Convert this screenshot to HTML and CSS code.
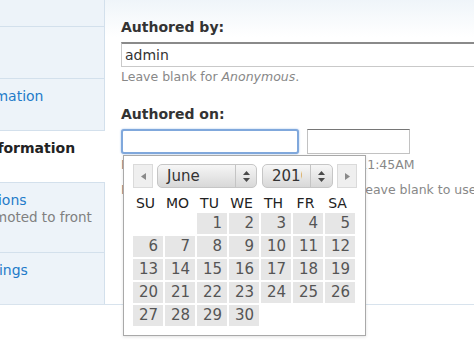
FILE: index.html
```html
<!DOCTYPE html>
<html>
<head>
    <link rel="stylesheet" href="styles.css">
</head>
<body>
    <div class="vertical-tabs">
        <ul class="vertical-tabs-list">
            <li class="vertical-tab">
                <a class="tab-title" href="#">Revision information</a>
                <div class="tab-summary">No revision</div>
            </li>
            <li class="vertical-tab">
                <a class="tab-title" href="#">Menu settings</a>
                <div class="tab-summary">Not in menu</div>
            </li>
            <li class="vertical-tab">
                <a class="tab-title" href="#">Location information</a>
                <div class="tab-summary">Not specified</div>
            </li>
            <li class="vertical-tab selected">
                <a class="tab-title" href="#">Authoring information</a>
                <div class="tab-summary">By admin</div>
            </li>
            <li class="vertical-tab">
                <a class="tab-title" href="#">Publishing options</a>
                <div class="tab-summary">Published, Promoted to front page</div>
            </li>
            <li class="vertical-tab">
                <a class="tab-title" href="#">Comment settings</a>
                <div class="tab-summary">Open</div>
            </li>
        </ul>

        <div class="vertical-tabs-pane">
            <div class="form-item">
                <label class="form-label">Authored by:</label>
                <input class="form-text author-input" type="text" value="admin">
                <div class="description">Leave blank for <em>Anonymous</em>.</div>
            </div>

            <div class="form-item date-item">
                <label class="form-label">Authored on:</label>
                <div class="date-row">
                    <div class="date-field">
                        <input class="form-text date-input focused" type="text">
                        <div class="description">Format: 06/01/2010</div>

                        <!-- popup calendar -->
                        <div class="datepicker">
                            <div class="dp-header">
                                <a class="dp-nav" href="#">
                                    <svg width="5" height="7" viewBox="0 0 5 7"><path d="M5 0V7L0 3.5Z" fill="#8a8a8a"/></svg>
                                </a>
                                <div class="dp-select dp-month">
                                    <span class="dp-select-label">June</span>
                                    <span class="dp-select-arrows">
                                        <svg width="7" height="11" viewBox="0 0 7 11"><path d="M3.5 0L7 4H0Z M0 7H7L3.5 11Z" fill="#4a4a4a"/></svg>
                                    </span>
                                </div>
                                <div class="dp-select dp-year">
                                    <span class="dp-select-label">2010</span>
                                    <span class="dp-select-arrows">
                                        <svg width="7" height="11" viewBox="0 0 7 11"><path d="M3.5 0L7 4H0Z M0 7H7L3.5 11Z" fill="#4a4a4a"/></svg>
                                    </span>
                                </div>
                                <a class="dp-nav" href="#">
                                    <svg width="5" height="7" viewBox="0 0 5 7"><path d="M0 0V7L5 3.5Z" fill="#8a8a8a"/></svg>
                                </a>
                            </div>
                            <div class="dp-weekdays">
                                <span>SU</span><span>MO</span><span>TU</span><span>WE</span><span>TH</span><span>FR</span><span>SA</span>
                            </div>
                            <div class="dp-days">
                                <span class="dp-empty"></span><span class="dp-empty"></span>
                                <a href="#">1</a><a href="#">2</a><a href="#">3</a><a href="#">4</a><a href="#">5</a>
                                <a href="#">6</a><a href="#">7</a><a href="#">8</a><a href="#">9</a><a href="#">10</a><a href="#">11</a><a href="#">12</a>
                                <a href="#">13</a><a href="#">14</a><a href="#">15</a><a href="#">16</a><a href="#">17</a><a href="#">18</a><a href="#">19</a>
                                <a href="#">20</a><a href="#">21</a><a href="#">22</a><a href="#">23</a><a href="#">24</a><a href="#">25</a><a href="#">26</a>
                                <a href="#">27</a><a href="#">28</a><a href="#">29</a><a href="#">30</a>
                            </div>
                        </div>
                    </div>
                    <div class="time-field">
                        <input class="form-text time-input" type="text">
                        <div class="description">Format: 11:45AM</div>
                    </div>
                </div>
                <div class="description field-help">Format: 2010-06-01 11:45:00 -05:00. Leave blank to use the time of form submission.</div>
            </div>
        </div>
    </div>
</body>
</html>
```

FILE: styles.css
```css
/* page - the screenshot is a crop of a wider node form */
html {
    overflow: hidden;
    background: #fff;
}

body {
    display: flow-root;  /* keep the negative top margin inside body */
    min-height: 100vh;
    margin: 0;
    font-family: "Lucida Grande", "DejaVu Sans", sans-serif;
    color: #333;
}

a {
    text-decoration: none;
}

/* vertical tabs wrapper */
.vertical-tabs {
    display: flex;
    width: 820px;
    margin: -25px 0 0 -113px;
    border-bottom: 1px solid #d8e3ed;
}

.vertical-tabs-list {
    flex: none;
    width: 218px;
    margin: 0;
    padding: 0;
    list-style: none;
    box-sizing: border-box;
    border-right: 1px solid #d3e0ec;
}

.vertical-tab {
    padding: 8px 8px 7.5px 12px;
    background: #edf3f9;
    border-bottom: 1px solid #d3e0ec;
}

.vertical-tab:last-child {
    border-bottom: 0;
}

.tab-title {
    display: block;
    font-size: 14px;
    line-height: 18px;
    color: #1f7bc9;
}

.tab-summary {
    font-size: 13.5px;
    line-height: 17.5px;
    color: #808080;
}

/* active tab joins the pane */
.vertical-tab.selected {
    background: #fff;
    margin-right: -1px;
}

.vertical-tab.selected .tab-title {
    font-weight: bold;
    color: #222;
}

/* pane */
.vertical-tabs-pane {
    flex: 1;
    padding: 43px 0 0 16px;
    background: linear-gradient(#eef4f9 22px, #fff 62px);
}

.form-label {
    display: block;
    font-size: 14px;
    font-weight: bold;
    line-height: 18px;
    color: #333;
    margin-bottom: 6px;
}

.form-text {
    display: block;
    box-sizing: border-box;
    height: 25px;
    margin: 0;
    padding: 0 3px;
    border: 1px solid #c9c9c9;
    border-top: 2px solid #8a8a8a;
    background: #fff;
    font-family: inherit;
    font-size: 14px;
    color: #333;
    outline: none;
}

.author-input {
    width: 480px;
}

.description {
    margin-top: 2px;
    font-size: 12.5px;
    line-height: 16px;
    color: #888;
    white-space: nowrap;
}

.date-item {
    margin-top: 20px;
}

/* date + time inputs */
.date-row {
    display: flex;
    gap: 8px;
}

.date-field {
    position: relative;
    width: 178px;
}

.date-input {
    width: 178px;
}

.date-input.focused {
    border: 2px solid #80a8dc;
    border-radius: 3px;
    box-shadow: 0 0 2px #9dbde8;
}

.time-field {
    width: 103px;
}

.time-input {
    width: 103px;
    border: 1px solid #c2c2c2;
    border-top-color: #767676;
}

.date-row .description {
    margin-top: 3px;
}

.field-help {
    margin-top: 9px;
}

/* popup calendar */
.datepicker {
    position: absolute;
    top: 26px;
    left: 2px;
    z-index: 10;
    width: 243px;
    box-sizing: border-box;
    padding: 8px 9px 9px;
    background: #fff;
    border: 1px solid #a9a9a9;
    box-shadow: 0 1px 3px rgba(0, 0, 0, 0.12);
}

.dp-header {
    display: flex;
    height: 24px;
}

.dp-nav {
    flex: none;
    display: flex;
    align-items: center;
    justify-content: center;
    width: 20px;
    height: 24px;
    box-sizing: border-box;
    border: 1px solid #dadada;
    background: #efefef;
}

.dp-select {
    flex: none;
    display: flex;
    box-sizing: border-box;
    height: 24px;
    border: 1px solid #c6c6c6;
    border-radius: 5px;
    background: linear-gradient(#f6f6f6, #d8d8d8);
}

.dp-month {
    width: 100px;
    margin: 0 5px 0 4px;
}

.dp-year {
    width: 71px;
    margin-right: 4px;
}

.dp-select-label {
    flex: none;
    box-sizing: border-box;
    padding-left: 9px;
    overflow: hidden;
    white-space: nowrap;
    font-size: 15px;
    line-height: 22px;
    color: #333;
}

.dp-month .dp-select-label {
    width: 77px;
}

.dp-year .dp-select-label {
    width: 39px;
}

.dp-select-arrows {
    display: flex;
    align-items: center;
    justify-content: center;
    width: 21px;
    margin-left: auto;
    border-left: 1px solid #c4c4c4;
}

.dp-weekdays,
.dp-days {
    display: grid;
    grid-template-columns: repeat(7, 30px);
    column-gap: 2px;
}

.dp-weekdays {
    margin-top: 6px;
}

.dp-weekdays span {
    padding-right: 5px;
    text-align: center;
    font-size: 14px;
    line-height: 18px;
    color: #222;
}

.dp-days {
    row-gap: 2px;
    margin-top: 1px;
}

.dp-days a {
    height: 21px;
    padding-right: 5px;
    background: #e6e6e6;
    text-align: right;
    font-size: 15px;
    line-height: 21px;
    color: #555;
}
```
